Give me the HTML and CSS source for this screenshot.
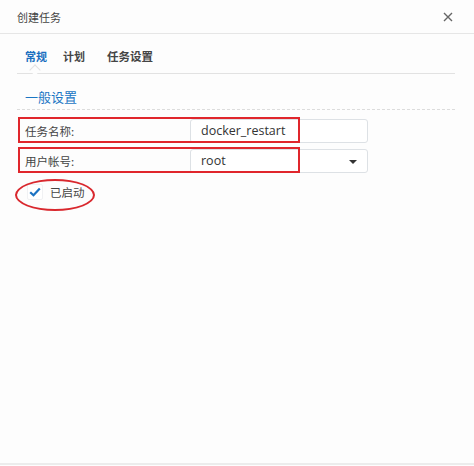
FILE: index.html
```html
<!DOCTYPE html>
<html lang="zh">
<head>
<meta charset="utf-8">
<title>创建任务</title>
<link rel="stylesheet" href="styles.css">
</head>
<body>
<div class="dialog">
  <div class="header">
    <span class="title">创建任务</span>
    <span class="close">
      <svg width="10" height="10" viewBox="0 0 10 10"><path d="M1 1L9 9M9 1L1 9" stroke="#666" stroke-width="1.4" fill="none"/></svg>
    </span>
  </div>
  <div class="body">
    <div class="tabs">
      <span class="tab active">常规</span>
      <span class="tab">计划</span>
      <span class="tab">任务设置</span>
    </div>
    <div class="section">一般设置</div>
    <div class="row">
      <span class="label">任务名称:</span>
      <div class="input">docker_restart</div>
      <div class="mark"></div>
    </div>
    <div class="row">
      <span class="label">用户帐号:</span>
      <div class="input select">root<span class="arrow"></span></div>
      <div class="mark"></div>
    </div>
    <div class="check-row">
      <span class="checkbox">
        <svg width="12" height="10" viewBox="0 0 12 10"><path d="M1.2 5.2L4.5 8.3L10.8 1.6" stroke="#1a72c2" stroke-width="2.2" fill="none"/></svg>
      </span>
      <span class="check-label">已启动</span>
      <div class="ellipse"></div>
    </div>
  </div>
  <div class="footer"></div>
</div>
</body>
</html>
```
FILE: styles.css
```css
html, body {
  margin: 0;
  padding: 0;
  background: #fdfdfd;
}
body {
  font-family: "Noto Sans CJK SC", "Liberation Sans", sans-serif;
  color: #3a3a3a;
}
.dialog {
  height: 466px;
  display: flex;
  flex-direction: column;
  box-sizing: border-box;
}
.header {
  height: 34px;
  border-bottom: 1px solid #e6e6e6;
  display: flex;
  align-items: center;
  justify-content: space-between;
  padding: 0 21px 0 17px;
  box-sizing: border-box;
}
.title {
  font-size: 11px;
  color: #444;
}
.close {
  display: flex;
  width: 10px;
  height: 10px;
}
.body {
  flex: 1;
  padding: 0 19px 0 17px;
}
.tabs {
  height: 40px;
  border-bottom: 1px solid #e2e2e2;
  display: flex;
  align-items: center;
  padding: 5px 0 0 8px;
  box-sizing: border-box;
}
.tab {
  font-size: 11px;
  font-weight: bold;
  color: #444;
  position: relative;
  margin-right: 16px;
}
.tab:nth-child(2) {
  margin-right: 22px;
}
.tab:last-child {
  font-size: 11.5px;
}
.tab.active {
  color: #1b6fbf;
}
.tab.active::after {
  content: "";
  position: absolute;
  left: 6px;
  top: 18px;
  width: 7px;
  height: 7px;
  background: #fdfdfd;
  border-left: 1px solid #e2e2e2;
  border-top: 1px solid #e2e2e2;
  transform: rotate(45deg);
}
.section {
  height: 36px;
  box-sizing: border-box;
  padding: 15px 0 0 8px;
  font-size: 13px;
  line-height: 16px;
  color: #1b76c4;
  border-bottom: 1px dashed #dcdcdc;
}
.row {
  position: relative;
  display: flex;
  align-items: center;
  height: 24px;
  margin-top: 9px;
}
.row + .row {
  margin-top: 6px;
}
.label {
  width: 173px;
  box-sizing: border-box;
  padding-left: 8px;
  font-size: 11.5px;
  color: #444;
}
.input {
  width: 178px;
  height: 24px;
  box-sizing: border-box;
  border: 1px solid #dde1e5;
  border-radius: 3px;
  background: #fff;
  padding-left: 10px;
  font-family: "Open Sans", "Liberation Sans", sans-serif;
  font-size: 12.5px;
  line-height: 22px;
  color: #333;
  position: relative;
}
.arrow {
  position: absolute;
  right: 10px;
  top: 10px;
  width: 0;
  height: 0;
  border-left: 4px solid transparent;
  border-right: 4px solid transparent;
  border-top: 4px solid #333;
}
.mark {
  position: absolute;
  left: 1px;
  top: -2px;
  width: 282px;
  height: 26px;
  box-sizing: border-box;
  border: 2px solid #e0262c;
}
.check-row {
  position: relative;
  display: flex;
  align-items: center;
  height: 24px;
  margin-top: 7px;
  padding-left: 10px;
}
.checkbox {
  width: 16px;
  height: 16px;
  border: 1px solid #f0f1f3;
  border-radius: 2px;
  display: flex;
  align-items: center;
  justify-content: center;
  box-sizing: border-box;
  background: #fff;
}
.check-label {
  margin-left: 7px;
  font-size: 11.5px;
  color: #444;
}
.ellipse {
  position: absolute;
  left: -2px;
  top: -1px;
  width: 80px;
  height: 32px;
  box-sizing: border-box;
  border: 2px solid #d9282e;
  border-radius: 50%;
}
.footer {
  height: 2px;
  background: #ececec;
  margin-bottom: 1px;
}
```
